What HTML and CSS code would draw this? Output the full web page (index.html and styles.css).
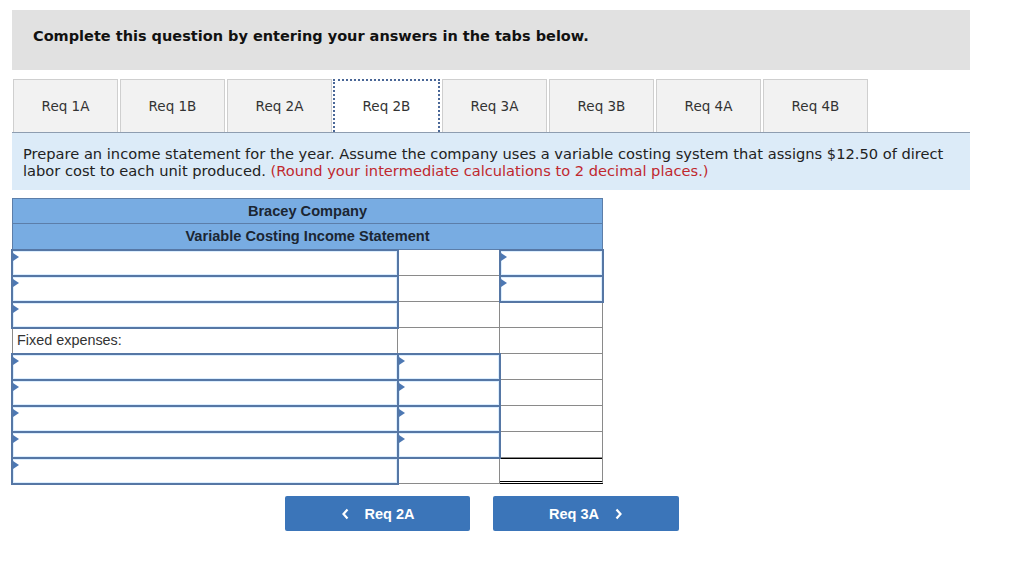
FILE: index.html
```html
<!DOCTYPE html>
<html>
<head>
<meta charset="utf-8">
<link rel="stylesheet" href="styles.css">
</head>
<body>
<div class="page">
  <div class="banner">Complete this question by entering your answers in the tabs below.</div>
  <div class="tabs">
    <div class="tab">Req 1A</div>
    <div class="tab">Req 1B</div>
    <div class="tab">Req 2A</div>
    <div class="tab active">Req 2B</div>
    <div class="tab">Req 3A</div>
    <div class="tab">Req 3B</div>
    <div class="tab">Req 4A</div>
    <div class="tab">Req 4B</div>
  </div>
  <div class="instructions">Prepare an income statement for the year. Assume the company uses a variable costing system that assigns $12.50 of direct labor cost to each unit produced. <span class="red">(Round your intermediate calculations to 2 decimal places.)</span></div>

  <div class="sheet">
    <div class="head first">Bracey Company</div>
    <div class="head">Variable Costing Income Statement</div>

    <div class="cell inp c1"></div><div class="cell"></div><div class="cell inp"></div>
    <div class="cell inp c1"></div><div class="cell"></div><div class="cell inp"></div>
    <div class="cell inp c1"></div><div class="cell"></div><div class="cell"></div>
    <div class="cell c1 label">Fixed expenses:</div><div class="cell"></div><div class="cell"></div>
    <div class="cell inp c1"></div><div class="cell inp"></div><div class="cell"></div>
    <div class="cell inp c1"></div><div class="cell inp"></div><div class="cell"></div>
    <div class="cell inp c1"></div><div class="cell inp"></div><div class="cell"></div>
    <div class="cell inp c1"></div><div class="cell inp"></div><div class="cell"></div>
    <div class="cell inp c1"></div><div class="cell total"></div><div class="cell total grand"></div>
  </div>

  <div class="nav">
    <div class="btn"><svg class="chev" width="9" height="12" viewBox="0 0 9 12"><path d="M6.5 1.5 L2.5 6 L6.5 10.5" fill="none" stroke="#fff" stroke-width="2.2"/></svg><span>Req 2A</span></div>
    <div class="btn"><span>Req 3A</span><svg class="chev" width="9" height="12" viewBox="0 0 9 12"><path d="M2.5 1.5 L6.5 6 L2.5 10.5" fill="none" stroke="#fff" stroke-width="2.2"/></svg></div>
  </div>
</div>
</body>
</html>
```
FILE: styles.css
```css
* { box-sizing: border-box; }
body {
  margin: 0;
  background: #fff;
  font-family: "DejaVu Sans", Verdana, sans-serif;
  color: #222;
}
.page {
  padding: 10px 0 0 12px;
  width: 970px;
}
.banner {
  height: 60px;
  background: #e1e1e1;
  padding: 16px 0 0 21px;
  font-weight: bold;
  font-size: 14.5px;
  line-height: 20px;
  color: #111;
}
.tabs {
  display: flex;
  margin-top: 9px;
  padding-left: 1px;
  height: 54px;
  border-bottom: 1px solid #8e9db0;
}
.tab {
  width: 105px;
  height: 53px;
  margin-right: 2px;
  background: #f2f2f2;
  border: 1px solid #cfcfcf;
  border-bottom: none;
  font-size: 13.5px;
  line-height: 52px;
  text-align: center;
  color: #333;
}
.tab.active {
  background: #fff;
  border: 2px dotted #4a6797;
  border-bottom: none;
  width: 107px;
  margin-left: -1px;
  line-height: 50px;
}
.instructions {
  height: 57px;
  background: #dcebf8;
  padding: 12px 0 0 11px;
  font-size: 14.65px;
  line-height: 17px;
  color: #222;
}
.red { color: #c0282e; }

.sheet {
  margin-top: 8px;
  width: 591px;
  display: grid;
  grid-template-columns: 386px 102px 103px;
  grid-auto-rows: 26px;
  font-family: "Liberation Sans", Arial, sans-serif;
}
.head {
  grid-column: 1 / 4;
  background: #78ace2;
  border: 1px solid #5c7ea9;
  border-top: none;
  text-align: center;
  font-weight: bold;
  font-size: 14.6px;
  line-height: 25px;
  color: #1b2633;
}
.head.first { border-top: 1px solid #5c7ea9; }
.cell {
  background: #fff;
  border-right: 1px solid #8a8a8a;
  border-bottom: 1px solid #8a8a8a;
}
.cell.c1 { border-left: 1px solid #8a8a8a; }
.cell.label {
  font-size: 14.4px;
  color: #333;
  padding-left: 4px;
  line-height: 25px;
}
.cell.inp {
  position: relative;
  border: 1px solid #5677a5;
  box-shadow: 0 0 0 1px #5677a5, inset 0 0 0 1px #dbeeff;
}
.cell.inp::before {
  content: "";
  position: absolute;
  left: 0;
  top: 2px;
  border-top: 4px solid transparent;
  border-bottom: 4px solid transparent;
  border-left: 6px solid #4d78b3;
}
.cell.total { box-shadow: inset 0 1px 0 #000; }
.cell.grand {
  border-bottom: 3px double #000;
}

.nav {
  display: flex;
  gap: 23px;
  margin-top: 12px;
  padding-left: 273px;
}
.btn {
  width: 185px;
  height: 35px;
  background: #3b75b9;
  border-radius: 2px;
  display: flex;
  align-items: center;
  justify-content: center;
  gap: 15px;
  color: #fff;
  font-family: "Liberation Sans", Arial, sans-serif;
  font-weight: bold;
  font-size: 14.5px;
}
.btn + .btn { width: 186px; }
.chev { display: block; }
```
